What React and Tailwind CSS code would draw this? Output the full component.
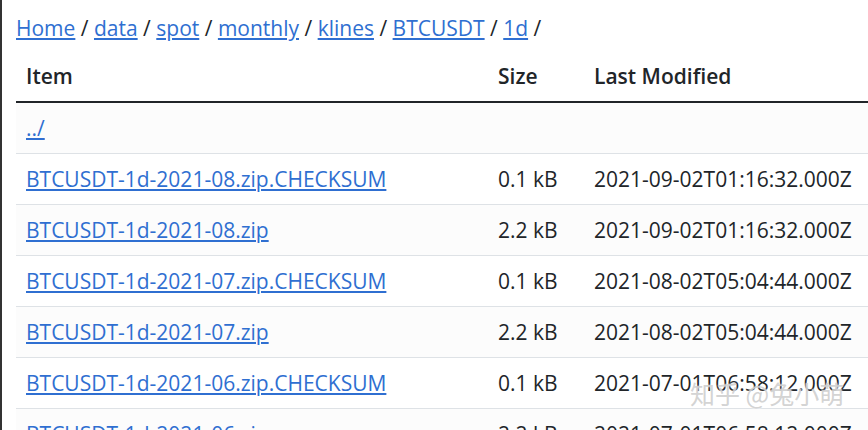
import React from "react";

const rows = [
  { name: "../", size: "", date: "" },
  { name: "BTCUSDT-1d-2021-08.zip.CHECKSUM", size: "0.1 kB", date: "2021-09-02T01:16:32.000Z" },
  { name: "BTCUSDT-1d-2021-08.zip", size: "2.2 kB", date: "2021-09-02T01:16:32.000Z" },
  { name: "BTCUSDT-1d-2021-07.zip.CHECKSUM", size: "0.1 kB", date: "2021-08-02T05:04:44.000Z" },
  { name: "BTCUSDT-1d-2021-07.zip", size: "2.2 kB", date: "2021-08-02T05:04:44.000Z" },
  { name: "BTCUSDT-1d-2021-06.zip.CHECKSUM", size: "0.1 kB", date: "2021-07-01T06:58:12.000Z" },
  { name: "BTCUSDT-1d-2021-06.zip", size: "2.2 kB", date: "2021-07-01T06:58:12.000Z" },
];

const crumbs = ["Home", "data", "spot", "monthly", "klines", "BTCUSDT", "1d"];

export default function App() {
  return (
    <div className="relative h-[430px] w-[868px] overflow-hidden bg-white border-l-2 border-[#333] font-['Open_Sans','Noto_Sans',sans-serif] text-[21px] leading-[30px] text-[#212529]">
      <div className="pl-[14px] pt-[13px]">
        <div className="h-[38px]">
          {crumbs.map((c) => (
            <span key={c}>
              <a className="text-[#2f6fd1] underline underline-offset-2">{c}</a>
              <span> / </span>
            </span>
          ))}
        </div>

        <div className="w-[900px]">
          <div className="flex border-b-2 border-[#212529] font-semibold">
            <div className="w-[472px] px-[10px] py-[10px]">Item</div>
            <div className="w-[96px] px-[10px] py-[10px]">Size</div>
            <div className="flex-1 px-[10px] py-[10px]">Last Modified</div>
          </div>
          {rows.map((r, i) => (
            <div
              key={r.name}
              className={`flex border-b border-[#dee2e6] ${i % 2 === 0 ? "bg-[#fcfcfc]" : "bg-white"}`}
            >
              <div className="w-[472px] px-[10px] py-[10px]">
                <a className="text-[#2f6fd1] underline underline-offset-2">{r.name}</a>
              </div>
              <div className="w-[96px] px-[10px] py-[10px]">{r.size}</div>
              <div className="flex-1 px-[10px] py-[10px]">{r.date}</div>
            </div>
          ))}
        </div>
      </div>

      <div className="absolute left-[688px] top-[378px] text-[25px] leading-[30px] text-[#c8c8c8]/80 font-['Noto_Sans_CJK_SC',sans-serif] [text-shadow:0_0_2px_#fff]">
        知乎 @兔小萌
      </div>
    </div>
  );
}
